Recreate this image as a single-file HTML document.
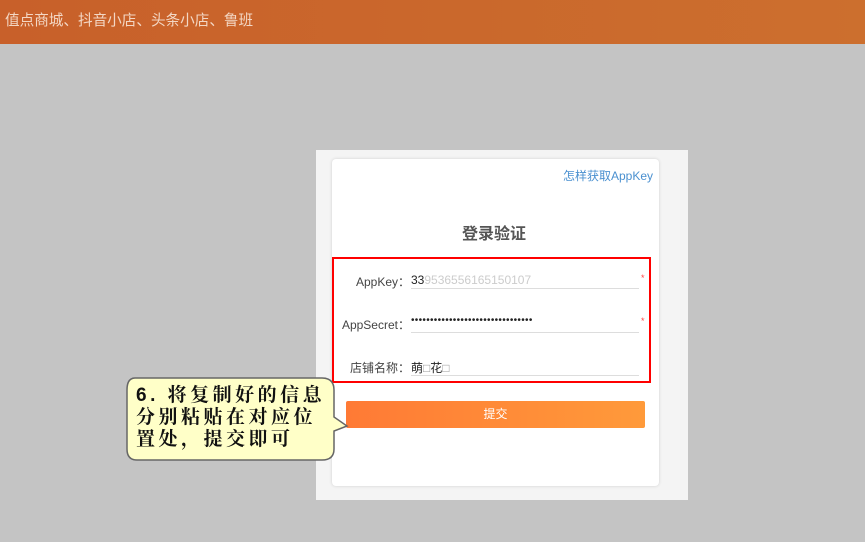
<!DOCTYPE html>
<html><head><meta charset="utf-8"><style>
*{margin:0;padding:0;box-sizing:border-box}
body{width:865px;height:542px;background:#c4c4c4;font-family:"Liberation Sans","Noto Sans CJK SC",sans-serif;position:relative;overflow:hidden}
.top{position:absolute;left:0;top:0;width:865px;height:44px;background:linear-gradient(90deg,#c8602a,#cc6f2e);color:#f3d7c4;font-size:14.6px;line-height:42px;padding-left:5px}
.outer{position:absolute;left:316px;top:150px;width:372px;height:350px;background:#f4f4f4}
.card{position:absolute;left:332px;top:159px;width:327px;height:327px;background:#fff;border-radius:4px;box-shadow:0 0 3px rgba(0,0,0,.15)}
.abs{position:absolute}
.lbl{position:absolute;font-size:12px;color:#444;text-align:right;width:80px}
.val{position:absolute;font-size:12px;color:#222}
.line{position:absolute;left:411px;width:228px;height:1px;background:#ddd}
.star{position:absolute;left:641px;color:#f44;font-size:9px}
</style></head><body>
<div class="top">值点商城、抖音小店、头条小店、鲁班</div>
<div class="outer"></div>
<div class="card"></div>
<div class="abs" style="left:563px;top:167px;font-size:12px;color:#4a90d0">怎样获取AppKey</div>
<div class="abs" style="left:462px;top:220px;font-size:16px;font-weight:bold;color:#555">登录验证</div>
<div class="abs" style="left:332px;top:257px;width:319px;height:126px;border:2px solid #f00"></div>
<div class="lbl" style="left:330px;top:273px">AppKey：</div>
<div class="val" style="left:411px;top:273px">33<span style="color:#ccc">9536556165150107</span></div>
<div class="line" style="top:288px"></div><div class="star" style="top:273px">*</div>
<div class="lbl" style="left:330px;top:316px">AppSecret：</div>
<div class="val" style="left:411px;top:315px;font-size:10px;letter-spacing:0.3px">••••••••••••••••••••••••••••••••</div>
<div class="line" style="top:332px"></div><div class="star" style="top:316px">*</div>
<div class="lbl" style="left:330px;top:359px">店铺名称：</div>
<div class="val" style="left:411px;top:359px">萌<span style="color:#999">□</span>花<span style="color:#999">□</span></div>
<div class="line" style="top:375px"></div>
<div class="abs" style="left:346px;top:401px;width:299px;height:27px;border-radius:2px;background:linear-gradient(90deg,#ff7a35,#ff9a3a);color:#fff;font-size:12px;text-align:center;line-height:27px">提交</div>
<svg class="abs" style="left:125px;top:377px" width="225" height="85"><path d="M10 1H197Q209 1 209 13V40L222 49L209 54V72Q209 83 197 83H12Q2 83 2 72V13Q2 1 10 1Z" fill="#ffffc8" stroke="#666" stroke-width="1.5"/></svg>
<div class="abs" style="left:136px;top:385px;font-size:19px;line-height:22px;color:#111;letter-spacing:3.5px;font-weight:bold;font-family:'Liberation Sans','Noto Serif CJK SC',serif">6. 将复制好的信息<br>分别粘贴在对应位<br>置处，提交即可</div>
</body></html>
